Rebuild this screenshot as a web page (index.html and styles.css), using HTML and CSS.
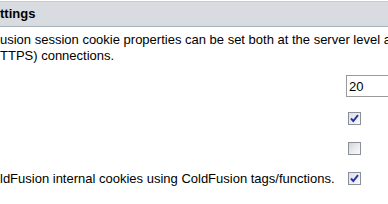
FILE: index.html
```html
<!DOCTYPE html>
<html lang="en">
<head>
  <meta charset="UTF-8">
  <title>Session Cookie Settings</title>
  <link rel="stylesheet" href="styles.css">
</head>
<body>

  <div class="section-header">ttings</div>

  <p class="section-desc">usion session cookie properties can be set both at the server level and<br>TTPS) connections.</p>

  <div class="settings-grid">
    <div class="setting-label"></div>
    <div class="setting-control first"><input type="text" class="text-field" value="20"></div>

    <div class="setting-label"></div>
    <div class="setting-control">
      <span class="check checked">
        <svg width="9" height="9" viewBox="0 0 9 9"><path d="M1 4.5 L3.3 7 L8 1.2" fill="none" stroke="#26349a" stroke-width="1.9"/></svg>
      </span>
    </div>

    <div class="setting-label"></div>
    <div class="setting-control"><span class="check"></span></div>

    <div class="setting-label">ldFusion internal cookies using ColdFusion tags/functions.</div>
    <div class="setting-control">
      <span class="check checked">
        <svg width="9" height="9" viewBox="0 0 9 9"><path d="M1 4.5 L3.3 7 L8 1.2" fill="none" stroke="#26349a" stroke-width="1.9"/></svg>
      </span>
    </div>
  </div>

</body>
</html>
```

FILE: styles.css
```css
body {
  margin: 0;
  padding-top: 1px;
  font-family: "Liberation Sans", Arial, sans-serif;
  font-size: 13px;
  color: #000;
  background: #fff;
  overflow: hidden;
  width: 388px;
}
.section-header {
  height: 24px;
  line-height: 24px;
  background: #d8dce0;
  border-top: 1px solid #c3ccd4;
  border-bottom: 1px solid #a7b2bb;
  font-weight: bold;
  font-size: 13px;
  white-space: nowrap;
}
.section-desc {
  margin: 5px 0 7px 0;
  line-height: 16px;
  white-space: nowrap;
}
.settings-grid {
  display: grid;
  grid-template-columns: 346px 60px;
}
.setting-label {
  height: 30px;
  display: flex;
  align-items: center;
  white-space: nowrap;
}
.setting-control {
  height: 30px;
  display: flex;
  align-items: center;
}
.setting-control.first,
.setting-label:first-child {
  margin-bottom: 2px;
}
.text-field {
  box-sizing: border-box;
  width: 60px;
  height: 22px;
  margin: 0;
  padding: 0 2px;
  border: 1px solid #9a9a9a;
  font-family: "Liberation Sans", Arial, sans-serif;
  font-size: 13px;
  color: #000;
  outline: none;
}
.check {
  box-sizing: border-box;
  width: 13px;
  height: 13px;
  margin-left: 2px;
  border: 1px solid #8a8f99;
  background: linear-gradient(135deg, #d2d4d8 0%, #eceef0 60%, #f8f8f8 100%);
  display: flex;
  align-items: center;
  justify-content: center;
}
.check.checked {
  background: linear-gradient(135deg, #dde0ea 0%, #f0f1f5 70%, #fafafa 100%);
}
```
